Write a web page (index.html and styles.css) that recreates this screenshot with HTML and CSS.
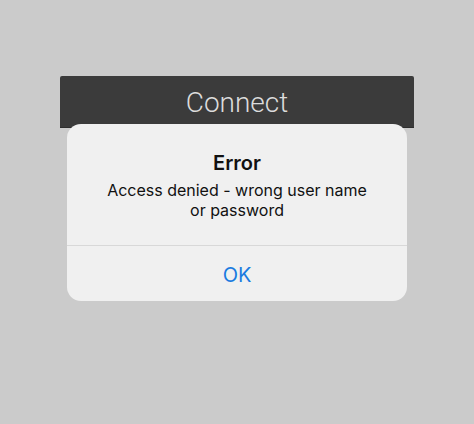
FILE: index.html
```html
<!DOCTYPE html>
<html lang="en">
<head>
  <meta charset="UTF-8">
  <meta name="viewport" content="width=device-width, initial-scale=1.0">
  <title>Connect</title>
  <link rel="stylesheet" href="styles.css">
</head>
<body>

  <!-- Screen behind the alert -->
  <div class="screen">
    <div class="nav-bar">Connect</div>

    <!-- Alert dialog -->
    <div class="alert">
      <div class="alert-body">
        <h2 class="alert-title">Error</h2>
        <p class="alert-message">Access denied - wrong user name<br>or password</p>
      </div>
      <button type="button" class="alert-btn">OK</button>
    </div>
  </div>

</body>
</html>
```

FILE: styles.css
```css
/* Global styling */
body { margin: 0; padding: 0; background-color: #cbcbcb; font-family: "Inter", "Noto Sans", sans-serif; }
.screen { display: flex; flex-direction: column; align-items: center; padding-top: 76px; }

/* Navigation bar */
.nav-bar { width: 354px; height: 52px; box-sizing: border-box; background-color: #3b3b3b; border-bottom: 1px solid #2e2e2e; border-radius: 2px 2px 0 0; color: #dcdcdc; font-family: "Roboto", sans-serif; font-weight: 300; font-size: 28px; text-align: center; line-height: 54px; }

/* Alert dialog */
.alert { position: relative; width: 340px; margin-top: -4px; background-color: #f0f0f0; border-radius: 14px; overflow: hidden; }
.alert-body { height: 122px; box-sizing: border-box; padding-top: 26px; text-align: center; border-bottom: 1px solid #d8d8d8; }
.alert-title { margin: 0; font-size: 20px; font-weight: 600; color: #111; line-height: 26px; }
.alert-message { margin: 4px 0 0; font-size: 16px; color: #111; line-height: 20px; }
.alert-btn { display: block; width: 100%; height: 55px; padding: 3px 0 0; border: none; background: none; color: #1a7be0; font-family: inherit; font-size: 20px; cursor: pointer; }
```
